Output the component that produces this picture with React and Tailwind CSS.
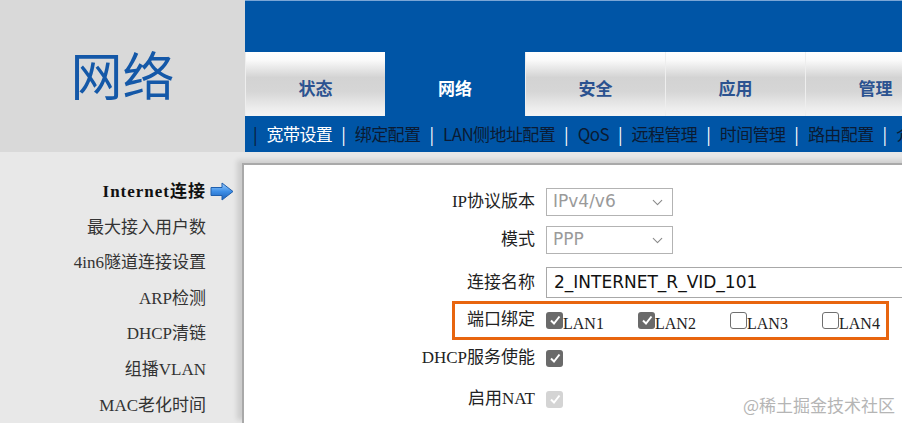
import { ChevronDown } from "lucide-react";

const serif = { fontFamily: '"Liberation Serif", "Noto Sans CJK SC", serif' };
const sans = { fontFamily: '"Noto Sans CJK SC", "DejaVu Sans", sans-serif' };
const verdana = { fontFamily: '"DejaVu Sans", "Noto Sans CJK SC", sans-serif' };

const tabs = ["状态", "网络", "安全", "应用", "管理"];
const subNav = ["宽带设置", "绑定配置", "LAN侧地址配置", "QoS", "远程管理", "时间管理", "路由配置", "介绍"];
const sideItems = [
  "Internet连接",
  "最大接入用户数",
  "4in6隧道连接设置",
  "ARP检测",
  "DHCP清链",
  "组播VLAN",
  "MAC老化时间",
];

const ArrowIcon = () => (
  <svg width="24" height="19" viewBox="0 0 24 19">
    <defs>
      <linearGradient id="arrowFill" x1="0" y1="0" x2="0" y2="1">
        <stop offset="0" stopColor="#9fd0ff" />
        <stop offset="0.5" stopColor="#3d8ee6" />
        <stop offset="1" stopColor="#1c5fb8" />
      </linearGradient>
    </defs>
    <path
      d="M1 5.5 H12 V1 L23 9.5 L12 18 V13.5 H1 Z"
      fill="url(#arrowFill)"
      stroke="#1f5fae"
      strokeWidth="1"
      strokeLinejoin="round"
    />
  </svg>
);

const Tick = () => (
  <svg width="12" height="12" viewBox="0 0 12 12">
    <path d="M2 6.5 L5 9.5 L10.5 2.5" fill="none" stroke="#fff" strokeWidth="2" />
  </svg>
);

const Check = ({ checked, disabled }) => {
  if (disabled)
    return (
      <span className="w-[17px] h-[17px] rounded-[3px] bg-[#d4d4d4] flex items-center justify-center">
        <Tick />
      </span>
    );
  if (checked)
    return (
      <span className="w-[17px] h-[17px] rounded-[3px] bg-[#6a6a6a] flex items-center justify-center">
        <Tick />
      </span>
    );
  return <span className="w-[17px] h-[17px] rounded-[3px] bg-white border border-[#6f6f6f]" />;
};

const Select = ({ value }) => (
  <div
    className="w-[127px] h-[28px] border border-[#b3b3b3] bg-white flex items-center justify-between pl-[6px] pr-[6px] text-[17px] text-[#9a9a9a]"
    style={verdana}
  >
    <span>{value}</span>
    <ChevronDown size={17} strokeWidth={1.5} color="#8a8a8a" />
  </div>
);

const Row = ({ label, className = "", children }) => (
  <div className={`flex items-center ${className}`}>
    <div className="w-[291px] text-right text-[17px] text-[#222]" style={serif}>
      {label}
    </div>
    <div className="ml-[11px] flex items-center flex-1">{children}</div>
  </div>
);

export default function App() {
  return (
    <div className="w-[902px] h-[423px] overflow-hidden bg-[#e8e8e8] flex flex-col relative">
      {/* header */}
      <div className="flex h-[152px] shrink-0">
        <div className="w-[245px] bg-[#d9d9d9] flex items-center justify-center pb-[4px]">
          <span className="text-[52px] text-[#1458a8] leading-none" style={sans}>
            网络
          </span>
        </div>
        <div className="flex-1 flex flex-col min-w-0">
          <div className="h-[52px] bg-[#0055a6] border-t border-[#7aa6d6]" />
          <div className="h-[64px] flex bg-[#0055a6]">
            {tabs.map((t, i) =>
              i === 1 ? (
                <div
                  key={t}
                  className="w-[140px] shrink-0 flex items-center justify-center text-white font-bold text-[17px] pt-[8px]"
                  style={sans}
                >
                  {t}
                </div>
              ) : (
                <div
                  key={t}
                  className="w-[140px] shrink-0 flex items-center justify-center text-[#2b5290] font-bold text-[17px] pt-[8px] border-l border-[#eeeeee] bg-[linear-gradient(to_bottom,#ffffff_0%,#fbfbfb_12%,#d3d3d3_40%,#d6d6d6_62%,#ededed_88%,#f4f4f4_100%)]"
                  style={sans}
                >
                  {t}
                </div>
              )
            )}
          </div>
          <div
            className="h-[36px] bg-[#0055a6] flex items-center pl-[8px] text-[17px] whitespace-nowrap overflow-hidden"
            style={sans}
          >
            <span className="text-[#0b1b33]">|</span>
            {subNav.map((s, i) => (
              <span key={s} className="flex items-center shrink-0">
                <span
                  className={`ml-[9px] mr-[9px] tracking-[-0.6px] ${i === 0 ? "text-white" : "text-[#0b1b33]"}`}
                >
                  {s}
                </span>
                <span className="text-white">|</span>
              </span>
            ))}
          </div>
        </div>
      </div>

      {/* body */}
      <div className="flex flex-1 min-h-0">
        <div className="w-[243px] shrink-0 pt-[22px] flex flex-col" style={serif}>
          {sideItems.map((item, i) => (
            <div key={item} className="h-[36px] flex items-center justify-end">
              <span
                className={`text-[17px] ${i === 0 ? "font-bold text-[#111] tracking-[1px]" : "text-[#333]"}`}
              >
                {item}
              </span>
              <span className="w-[37px] pl-[4px] flex items-center">{i === 0 && <ArrowIcon />}</span>
            </div>
          ))}
        </div>

        <div className="flex-1 mt-[11px] bg-white border-l-[2px] border-t-[2px] border-[#a9a9a9] shadow-[-5px_-3px_5px_rgba(0,0,0,0.12)] flex flex-col pt-[23px] -ml-[1px]">
          <Row label="IP协议版本" className="h-[28px]">
            <Select value="IPv4/v6" />
          </Row>
          <Row label="模式" className="h-[28px] mt-[10px]">
            <Select value="PPP" />
          </Row>
          <Row label="连接名称" className="h-[31px] mt-[13px]">
            <div
              className="w-[400px] h-[31px] border border-[#a8a8a8] flex items-center pl-[7px] text-[17px] text-[#111]"
              style={verdana}
            >
              2_INTERNET_R_VID_101
            </div>
          </Row>
          <div className="relative mt-[3px]">
            <Row label="端口绑定" className="h-[38px]">
              {["LAN1", "LAN2", "LAN3", "LAN4"].map((l, i) => (
                <span key={l} className="w-[92px] flex items-center">
                  <Check checked={i < 2} />
                  <span className="text-[16px] text-[#222] mt-[7px]" style={serif}>
                    {l}
                  </span>
                </span>
              ))}
            </Row>
            <div className="absolute left-[208px] top-0 w-[437px] h-[39px] border-[3px] border-[#e8650f]" />
          </div>
          <Row label="DHCP服务使能" className="h-[38px]">
            <Check checked />
          </Row>
          <Row label="启用NAT" className="h-[40px] mt-[2px]">
            <Check disabled />
          </Row>
        </div>
      </div>

      <div className="absolute right-[7px] bottom-[6px] text-[17px] text-[#b5b5b5]" style={sans}>
        @稀土掘金技术社区
      </div>
    </div>
  );
}
